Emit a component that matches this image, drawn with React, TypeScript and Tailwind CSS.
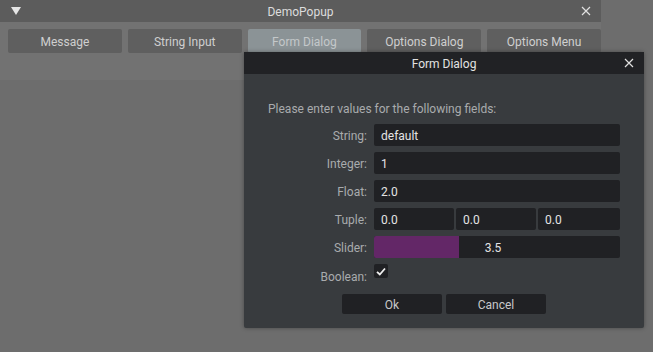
import React from 'react';

const font = { fontFamily: 'Roboto, "Liberation Sans", sans-serif' };

const TopButton: React.FC<{ label: string; active?: boolean }> = ({ label, active }) => (
  <div
    className={`w-[114px] h-[24px] pt-[2px] rounded-[2px] flex items-center justify-center text-[12px] ${
      active ? 'bg-[#8b9396] text-[#c4c8ca]' : 'bg-[#5f5f5f] text-[#cfcfcf]'
    }`}
  >
    {label}
  </div>
);

const Field: React.FC<{ children: React.ReactNode; className?: string }> = ({ children, className }) => (
  <div className={`h-[22px] pt-[1px] rounded-[2px] bg-[#202124] flex items-center px-[7px] text-[12px] text-[#e4e4e4] ${className || ''}`}>
    {children}
  </div>
);

const Row: React.FC<{ label: string; children: React.ReactNode }> = ({ label, children }) => (
  <div className="flex items-center h-[22px]">
    <div className="w-[123px] pr-[7px] pt-[1px] text-right text-[12px] text-[#a9abad]">{label}</div>
    <div className="w-[246px] flex gap-[2px]">{children}</div>
  </div>
);

export default function App() {
  return (
    <div className="relative w-[653px] h-[352px] bg-[#6d6d6d] overflow-hidden" style={font}>
      {/* DemoPopup window */}
      <div className="w-[601px] h-[80px] bg-[#727272]">
        <div className="h-[22px] bg-[#5c5c5c] flex items-center px-[11px] relative">
          <svg width="10" height="8" viewBox="0 0 10 8" className="absolute left-[11px] top-[7px]">
            <polygon points="0,0 10,0 5,8" fill="#e6e6e6" />
          </svg>
          <div className="flex-1 text-center text-[12px] text-[#dcdcdc] pt-[1px]">DemoPopup</div>
          <svg width="10" height="10" viewBox="0 0 10 10" className="absolute left-[581px] top-[6px]">
            <path d="M1 1 L9 9 M9 1 L1 9" stroke="#e0e0e0" strokeWidth="1.2" />
          </svg>
        </div>
        <div className="flex gap-[6px] pl-[8px] pt-[7px]">
          <TopButton label="Message" />
          <TopButton label="String Input" />
          <TopButton label="Form Dialog" active />
          <TopButton label="Options Dialog" />
          <TopButton label="Options Menu" />
        </div>
      </div>

      {/* Form Dialog */}
      <div className="absolute left-[244px] top-[52px] w-[400px] h-[276px] bg-[#383b3e] rounded-[2px] shadow-[0_0_4px_rgba(0,0,0,0.35)]">
        <div className="h-[22px] pt-[1px] bg-[#212225] flex items-center justify-center relative text-[12px] text-[#e2e2e2]">
          Form Dialog
          <svg width="10" height="10" viewBox="0 0 10 10" className="absolute left-[380px] top-[6px]">
            <path d="M1 1 L9 9 M9 1 L1 9" stroke="#e0e0e0" strokeWidth="1.2" />
          </svg>
        </div>
        <div className="pl-[7px] pt-[27px]">
          <div className="pl-[17px] text-[12px] text-[#a9abad] h-[16px] leading-[16px]">
            Please enter values for the following fields:
          </div>
          <div className="flex flex-col gap-[6px] mt-[7px]">
            <Row label="String:">
              <Field className="w-full">default</Field>
            </Row>
            <Row label="Integer:">
              <Field className="w-full">1</Field>
            </Row>
            <Row label="Float:">
              <Field className="w-full">2.0</Field>
            </Row>
            <Row label="Tuple:">
              <Field className="w-[80px]">0.0</Field>
              <Field className="w-[80px]">0.0</Field>
              <Field className="w-[82px]">0.0</Field>
            </Row>
            <Row label="Slider:">
              <div className="relative w-full h-[22px] pt-[1px] rounded-[2px] bg-[#202124] overflow-hidden flex items-center">
                <div className="absolute left-0 top-0 h-full w-[85px] bg-[#632767]" />
                <div className="relative w-full text-center text-[12px] text-[#e4e4e4] pr-[8px]">3.5</div>
              </div>
            </Row>
          </div>
          <div className="flex items-start h-[22px] mt-[6px]">
            <div className="w-[123px] pr-[7px] text-right text-[12px] text-[#a9abad] pt-[4px]">Boolean:</div>
            <div className="w-[14px] h-[14px] rounded-[2px] bg-[#202124] flex items-center justify-center">
              <svg width="10" height="9" viewBox="0 0 10 9">
                <path d="M1 4.8 L3.8 7.5 L9 1.5" stroke="#f0f0f0" strokeWidth="1.8" fill="none" />
              </svg>
            </div>
          </div>
          <div className="flex gap-[4px] pl-[91px] mt-[8px]">
            <div className="w-[100px] h-[20px] pt-[1px] rounded-[2px] bg-[#202124] flex items-center justify-center text-[12px] text-[#c8c9ca]">Ok</div>
            <div className="w-[100px] h-[20px] pt-[1px] rounded-[2px] bg-[#202124] flex items-center justify-center text-[12px] text-[#c8c9ca]">Cancel</div>
          </div>
        </div>
      </div>
    </div>
  );
}
